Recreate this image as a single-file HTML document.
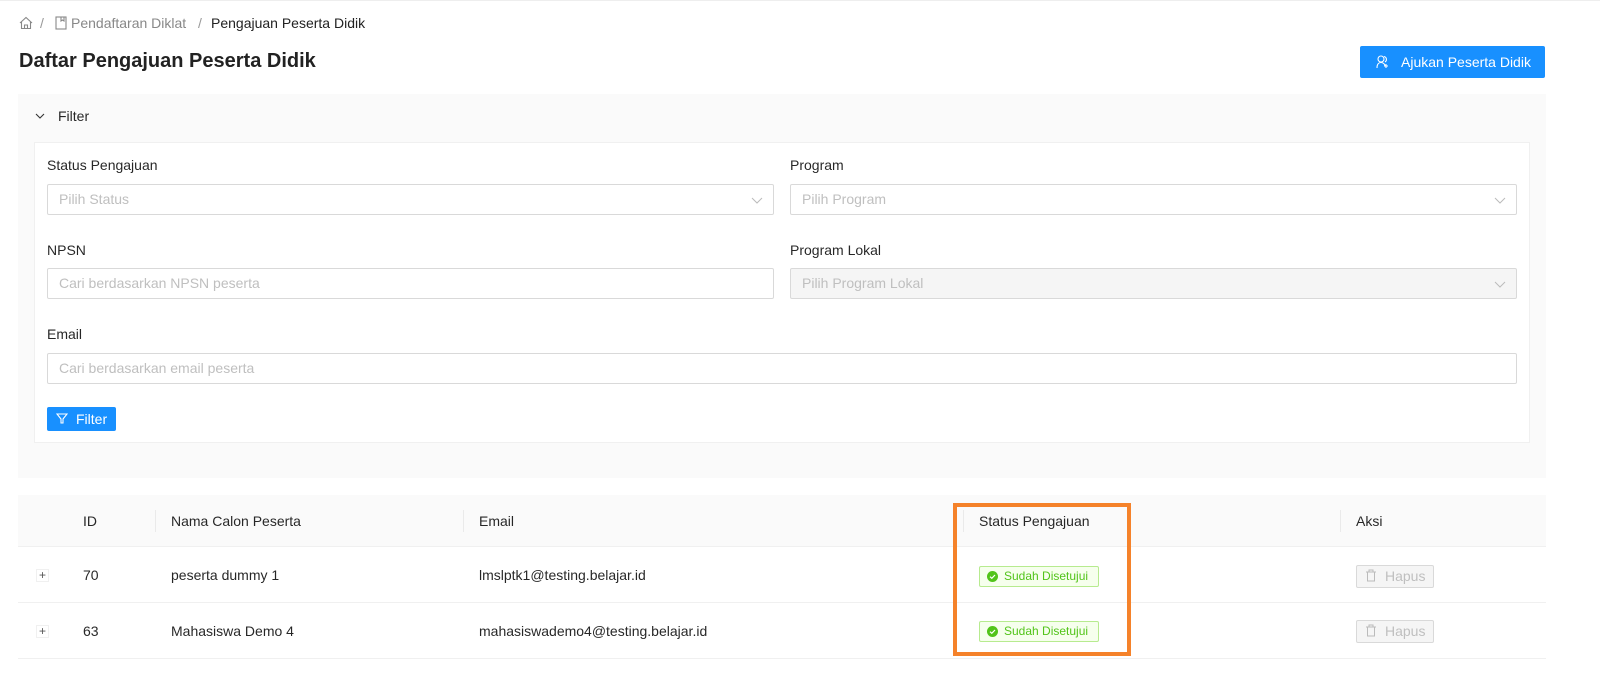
<!DOCTYPE html>
<html><head><meta charset="utf-8"><style>
*{box-sizing:border-box;margin:0;padding:0}
body{width:1600px;height:676px;background:#fff;font-family:"Liberation Sans",sans-serif;color:rgba(0,0,0,.85);font-size:14px;position:relative;overflow:hidden}
.a{position:absolute}
.lbl{font-size:14px;color:rgba(0,0,0,.85)}
.inp{position:absolute;height:31px;border:1px solid #d9d9d9;border-radius:2px;background:#fff;font-size:14px;color:#bfbfbf;padding:6px 11px;line-height:17px}
.dis{background:#f5f5f5}
.chev{position:absolute;right:10px;top:9px}
.sep{position:absolute;width:1px;height:22px;background:#eaeaea;top:510px}
.td{position:absolute;font-size:14px}
.tag{position:absolute;left:979px;width:120px;height:21px;border:1px solid #b7eb8f;background:#f6ffed;color:#52c41a;font-size:12px;border-radius:2px;line-height:19px;padding-left:24px}
.tag svg{position:absolute;left:7px;top:4px}
.hap{position:absolute;left:1356px;width:78px;height:23px;border:1px solid #d9d9d9;background:#f5f5f5;color:#bfbfbf;font-size:14px;line-height:21px;padding-left:28px;border-radius:2px}
.plus{position:absolute;left:36px;width:13px;height:13px;border:1px solid #f0f0f0;font-size:12px;line-height:10px;text-align:center;color:#555}
</style></head><body>
<div class="a" style="left:0;top:0;width:1600px;height:1px;background:#eee"></div>
<svg class="a" style="left:19px;top:16px" width="14" height="14" viewBox="0 0 14 14" fill="none" stroke="#888" stroke-width="1.1"><path d="M1 7L7 1.5 13 7M2.5 5.7V12.5H11.5V5.7M5.5 12.5V9H8.5V12.5"/></svg>
<div class="a" style="left:40px;top:15px;color:#999">/</div>
<svg class="a" style="left:55px;top:16px" width="12" height="14" viewBox="0 0 12 14" fill="none" stroke="#888" stroke-width="1.1"><rect x="1" y="1" width="10" height="12"/><path d="M6 1V5L7.5 4 9 5V1"/></svg>
<div class="a" style="left:71px;top:15px;color:#888">Pendaftaran Diklat</div>
<div class="a" style="left:198px;top:15px;color:#999">/</div>
<div class="a" style="left:211px;top:15px;color:#222">Pengajuan Peserta Didik</div>
<div class="a" style="left:19px;top:50px;font-size:20px;font-weight:bold;color:#222">Daftar Pengajuan Peserta Didik</div>
<div class="a" style="left:1360px;top:46px;width:185px;height:32px;background:#1890ff;border-radius:2px;color:#fff;font-size:14px;line-height:32px;padding-left:41px">Ajukan Peserta Didik</div>
<svg class="a" style="left:1376px;top:55px" width="14" height="14" viewBox="0 0 14 14" fill="none" stroke="#fff" stroke-width="1.1"><circle cx="5" cy="4" r="3"/><path d="M1 13C1 9 3 7.5 5 7.5S9 9 9 11M10 9V13M8 11H12"/><path d="M8 1.5A3 3 0 0 1 9 7"/></svg>

<div class="a" style="left:18px;top:94px;width:1528px;height:384px;background:#fafafa"></div>
<svg class="a" style="left:35px;top:111px" width="10" height="10" viewBox="0 0 10 10" fill="none" stroke="#333" stroke-width="1.1"><path d="M1 3L5 7 9 3"/></svg>
<div class="a" style="left:58px;top:108px">Filter</div>
<div class="a" style="left:34px;top:142px;width:1496px;height:301px;background:#fff;border:1px solid #f0f0f0"></div>
<div class="a lbl" style="left:47px;top:157px">Status Pengajuan</div>
<div class="inp" style="left:47px;top:184px;width:727px">Pilih Status<svg class="chev" width="12" height="12" viewBox="0 0 12 12" fill="none" stroke="#bbb"><path d="M1 4L6 9 11 4"/></svg></div>
<div class="a lbl" style="left:790px;top:157px">Program</div>
<div class="inp" style="left:790px;top:184px;width:727px">Pilih Program<svg class="chev" width="12" height="12" viewBox="0 0 12 12" fill="none" stroke="#bbb"><path d="M1 4L6 9 11 4"/></svg></div>
<div class="a lbl" style="left:47px;top:242px">NPSN</div>
<div class="inp" style="left:47px;top:268px;width:727px">Cari berdasarkan NPSN peserta</div>
<div class="a lbl" style="left:790px;top:242px">Program Lokal</div>
<div class="inp dis" style="left:790px;top:268px;width:727px">Pilih Program Lokal<svg class="chev" width="12" height="12" viewBox="0 0 12 12" fill="none" stroke="#bbb"><path d="M1 4L6 9 11 4"/></svg></div>
<div class="a lbl" style="left:47px;top:326px">Email</div>
<div class="inp" style="left:47px;top:353px;width:1470px">Cari berdasarkan email peserta</div>
<div class="a" style="left:47px;top:407px;width:69px;height:24px;background:#1890ff;border-radius:2px;color:#fff;line-height:24px;padding-left:29px">Filter</div>
<svg class="a" style="left:56px;top:413px" width="12" height="12" viewBox="0 0 12 12" fill="none" stroke="#fff" stroke-width="1.1"><path d="M1 1H11L7 6V10H5V6Z"/></svg>

<div class="a" style="left:18px;top:495px;width:1528px;height:52px;background:#fafafa;border-bottom:1px solid #f0f0f0"></div>
<div class="td" style="left:83px;top:513px">ID</div>
<div class="sep" style="left:155px"></div><div class="td" style="left:171px;top:513px">Nama Calon Peserta</div>
<div class="sep" style="left:463px"></div><div class="td" style="left:479px;top:513px">Email</div>
<div class="sep" style="left:963px"></div><div class="td" style="left:979px;top:513px">Status Pengajuan</div>
<div class="sep" style="left:1340px"></div><div class="td" style="left:1356px;top:513px">Aksi</div>

<div class="a" style="left:18px;top:602px;width:1528px;height:1px;background:#f0f0f0"></div>
<div class="a" style="left:18px;top:658px;width:1528px;height:1px;background:#f0f0f0"></div>
<div class="plus" style="top:569px">+</div>
<div class="td" style="left:83px;top:567px">70</div>
<div class="td" style="left:171px;top:567px">peserta dummy 1</div>
<div class="td" style="left:479px;top:567px">lmslptk1@testing.belajar.id</div>
<div class="tag" style="top:566px"><svg width="11" height="11" viewBox="0 0 11 11"><circle cx="5.5" cy="5.5" r="5.5" fill="#52c41a"/><path d="M3 5.7L4.8 7.3 8 4" fill="none" stroke="#fff" stroke-width="1.2"/></svg>Sudah Disetujui</div>
<div class="hap" style="top:565px">Hapus</div>
<svg class="a" style="left:1365px;top:569px" width="12" height="13" viewBox="0 0 12 13" fill="none" stroke="#bbb"><path d="M1 3H11M4 3V1H8V3M2.5 3V12H9.5V3"/></svg>
<div class="plus" style="top:625px">+</div>
<div class="td" style="left:83px;top:623px">63</div>
<div class="td" style="left:171px;top:623px">Mahasiswa Demo 4</div>
<div class="td" style="left:479px;top:623px">mahasiswademo4@testing.belajar.id</div>
<div class="tag" style="top:621px"><svg width="11" height="11" viewBox="0 0 11 11"><circle cx="5.5" cy="5.5" r="5.5" fill="#52c41a"/><path d="M3 5.7L4.8 7.3 8 4" fill="none" stroke="#fff" stroke-width="1.2"/></svg>Sudah Disetujui</div>
<div class="hap" style="top:620px">Hapus</div>
<svg class="a" style="left:1365px;top:624px" width="12" height="13" viewBox="0 0 12 13" fill="none" stroke="#bbb"><path d="M1 3H11M4 3V1H8V3M2.5 3V12H9.5V3"/></svg>

<div class="a" style="left:953px;top:503px;width:178px;height:153px;border:4px solid #f5822a"></div>
</body></html>
